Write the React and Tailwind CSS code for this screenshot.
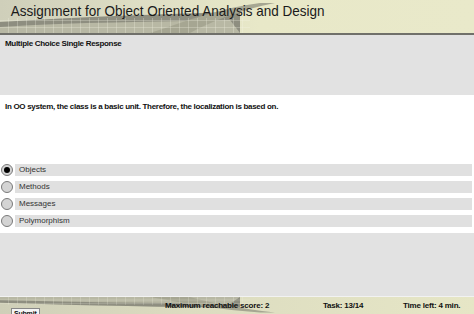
import React from "react";

const options = ["Objects", "Methods", "Messages", "Polymorphism"];

const Swoosh = ({ flip }) => (
  <svg
    className="absolute inset-0 h-full w-full"
    viewBox="0 0 474 33"
    preserveAspectRatio="none"
    style={flip ? { transform: "scaleY(-1)" } : undefined}
  >
    <defs>
      <pattern id={flip ? "gridF" : "grid"} width="9" height="7" patternUnits="userSpaceOnUse">
        <path d="M9 0V7M0 7H9" stroke="#f4f4e4" strokeWidth="0.8" opacity="0.7" />
      </pattern>
    </defs>
    <path d="M0 22 C 90 16, 170 14, 240 12 L 240 33 L 0 33 Z" fill="#8e8e80" />
    <path d="M0 27 C 80 22, 150 22, 230 20 L 240 33 L 0 33 Z" fill="#b8b8a4" />
    <path d="M150 33 C 190 20, 220 8, 260 3 L 275 3 C 240 10, 210 22, 190 33 Z" fill="#a6a692" />
    <rect x="0" y="18" width="250" height="15" fill={`url(#${flip ? "gridF" : "grid"})`} />
  </svg>
);

const App = () => {
  return (
    <div className="w-[474px] h-[314px] overflow-hidden bg-white font-['Liberation_Sans',Arial,sans-serif] flex flex-col">
      <div className="relative h-[35px] shrink-0 bg-[linear-gradient(90deg,#cfcfba_0%,#dedec4_30%,#e8e8c8_55%,#e9e9ca_100%)] border-b-2 border-[#70706a]">
        <Swoosh />
        <div className="relative pl-[12px] pt-[2px] text-[15px] leading-[18px] text-[#1a1a1a] origin-left scale-x-[0.9] whitespace-nowrap">
          Assignment for Object Oriented Analysis and Design
        </div>
      </div>

      <div className="h-[60px] shrink-0 bg-[#e2e2e2] px-[5px] pt-[3px] text-[8px] font-bold tracking-[-0.3px] text-[#111]">
        Multiple Choice Single Response
      </div>

      <div className="h-[69px] shrink-0 px-[5px] pt-[6px] text-[8px] font-bold tracking-[-0.3px] text-[#111]">
        In OO system, the class is a basic unit. Therefore, the localization is based on.
      </div>

      <div className="flex flex-col gap-[5px]">
        {options.map((o, i) => (
          <div key={o} className="flex items-center h-[12px]">
            <div className="w-[12px] h-[12px] ml-[1px] rounded-full border border-[#7a7a7a] bg-[#d4d4d4] flex items-center justify-center shrink-0">
              {i === 0 && <div className="w-[6px] h-[6px] rounded-full bg-black" />}
            </div>
            <div className="ml-[2px] flex-1 mr-[2px] h-[12px] bg-[#e0e0e0] pl-[4px] text-[8px] leading-[12px] text-[#333]">
              {o}
            </div>
          </div>
        ))}
      </div>

      <div className="mt-[6px] h-[63px] shrink-0 bg-[#e2e2e2]" />

      <div className="relative flex-1 bg-[linear-gradient(90deg,#cfcfb8_0%,#dcdcc0_40%,#e6e6c6_100%)] border-t border-[#f2f2f2]">
        <Swoosh flip />
        <div className="relative flex items-start text-[8px] font-bold tracking-[-0.2px] text-[#111] pt-[3px] h-full">
          <div className="w-[165px] relative">
            <button className="absolute left-[11px] top-[8px] h-[12px] px-[2px] bg-[#f4f4f4] border border-[#888] text-[7px] leading-[10px] font-bold">
              Submit
            </button>
          </div>
          <div className="w-[158px]">Maximum reachable score: 2</div>
          <div className="w-[80px]">Task: 13/14</div>
          <div>Time left: 4 min.</div>
        </div>
      </div>
    </div>
  );
};

export default App;
